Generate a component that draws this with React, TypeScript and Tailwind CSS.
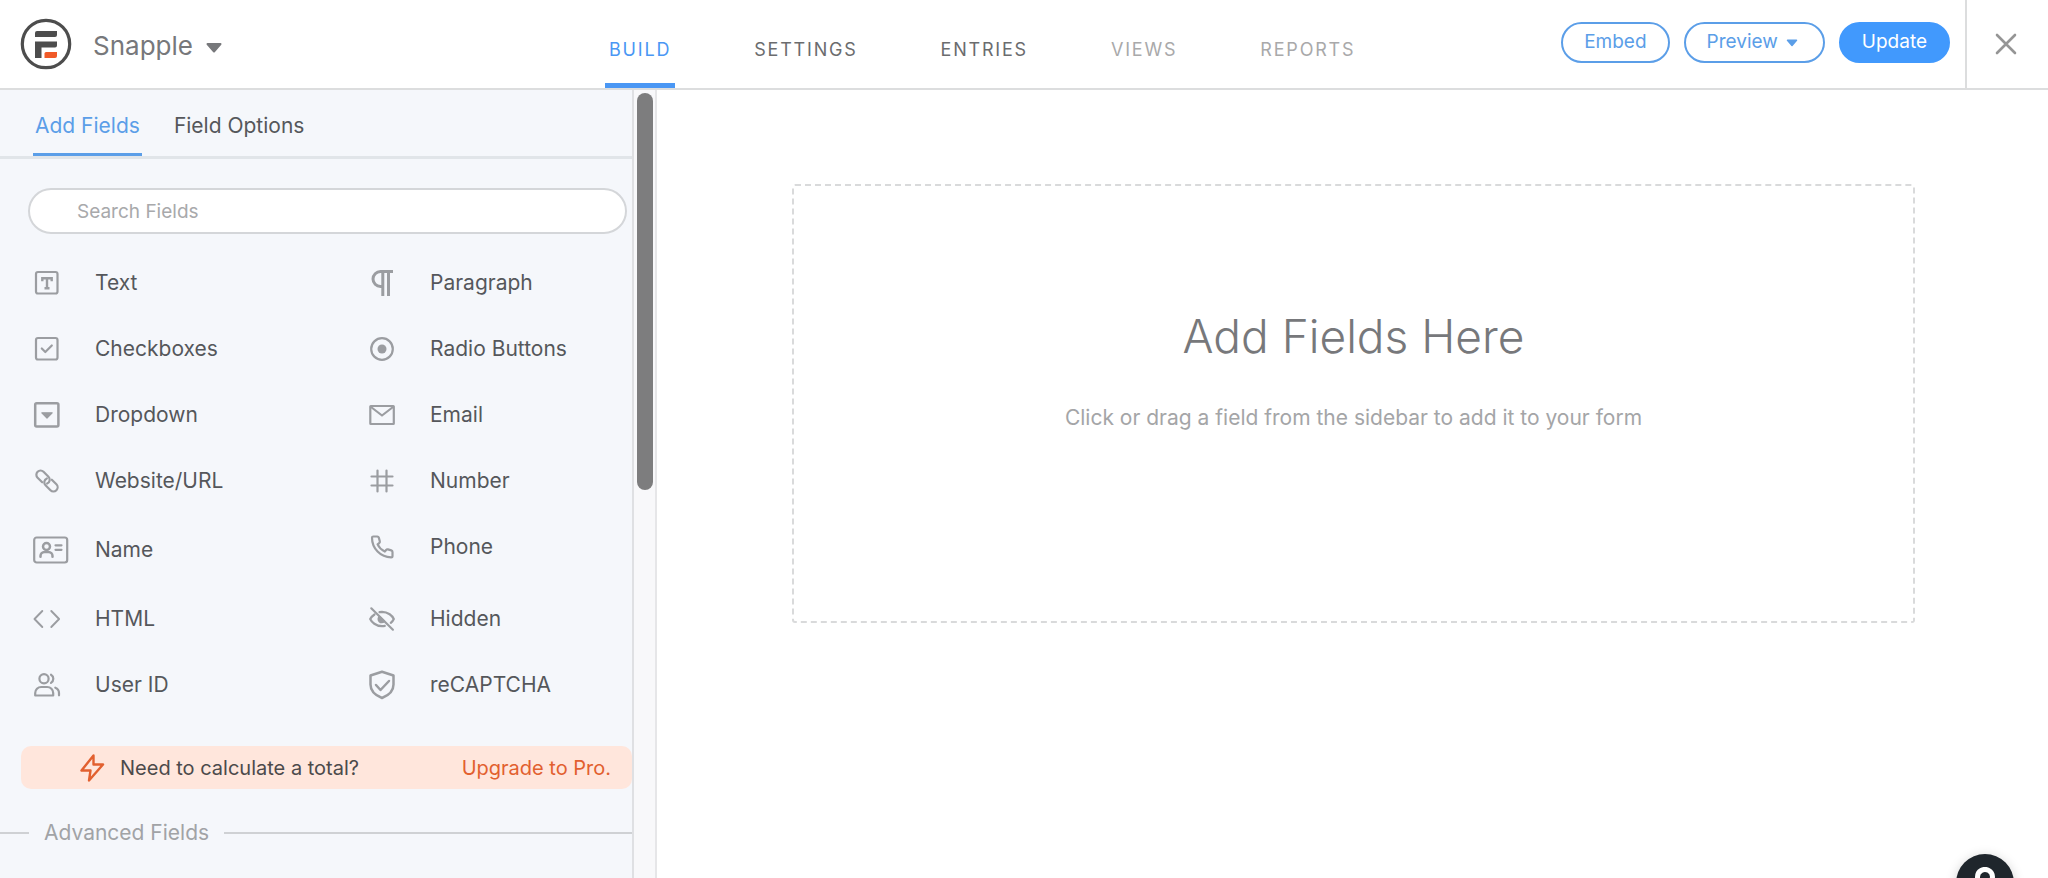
import type { ReactNode } from "react";

type Field = { label: string; icon: ReactNode };

function Icon({ children, className = "size-7", box = "0 0 28 28" }: { children: ReactNode; className?: string; box?: string }) {
  return (
    <svg
      viewBox={box}
      className={className}
      fill="none"
      stroke="currentColor"
      strokeWidth="2.200"
      strokeLinecap="round"
      strokeLinejoin="round"
      aria-hidden="true"
    >
      {children}
    </svg>
  );
}

const textIcon = (
  <Icon>
    <rect x="3" y="3" width="21.500" height="21.500" rx="2" />
    <path d="M9.300 12.200V9.300h9.400v2.900M14 9.500v10M11.500 19.300h5" strokeWidth="2.400" strokeLinecap="butt" strokeLinejoin="miter" />
  </Icon>
);
const paragraphIcon = (
  <Icon>
    <path d="M25 2.500H12.500a7.500 7.500 0 0 0 0 15H14M14.800 2.500V27M20.500 2.500V27" strokeWidth="3" strokeLinecap="butt" />
  </Icon>
);
const checkIcon = (
  <Icon>
    <rect x="3" y="3" width="21.500" height="21.500" rx="2" />
    <path d="m8.800 13.500 3.500 3.500 6.500-6.500" />
  </Icon>
);
const radioIcon = (
  <Icon>
    <circle cx="14" cy="14" r="10.800" />
    <circle cx="14" cy="14" r="4.500" fill="currentColor" stroke="none" />
  </Icon>
);
const dropdownIcon = (
  <Icon>
    <rect x="2.200" y="2.200" width="23.200" height="23.200" rx="1.500" strokeWidth="2.500" />
    <path d="M8.800 11.800h10.400L14 17z" fill="currentColor" strokeWidth="1.200" />
  </Icon>
);
const emailIcon = (
  <Icon>
    <rect x="2.300" y="5" width="23.500" height="18" rx="0.500" />
    <path d="m3 6 11 8.500L25 6" />
  </Icon>
);
const linkIcon = (
  <Icon>
    <g transform="rotate(45 14 14)">
      <path d="M11.500 18.300H5a4.200 4.200 0 0 1 0-8.400h7a4.200 4.200 0 0 1 3.900 5.800" />
      <path d="M16.500 9.700H23a4.200 4.200 0 0 1 0 8.400h-7a4.200 4.200 0 0 1-3.900-5.800" />
    </g>
  </Icon>
);
const numberIcon = (
  <Icon>
    <path d="M9.500 3.500v21M18.500 3.500v21M3.500 9.500h21M3.500 18.500h21" />
  </Icon>
);
const nameIcon = (
  <Icon className="h-7 w-9" box="0 0 36 28">
    <rect x="1.200" y="1.500" width="33" height="25" rx="2.500" />
    <circle cx="13.500" cy="10.500" r="3.500" strokeWidth="2.500" />
    <path d="M7.500 20.800v-.8a4 4 0 0 1 4-4h4a4 4 0 0 1 4 4v.8" strokeWidth="2.500" />
    <path d="M22.500 9.300h6M22.500 13.800h6" />
  </Icon>
);
const phoneIcon = (
  <Icon>
    <path d="M4 4.800C4 4 4.600 3.500 5.300 3.500h4c.8 0 1.300.4 1.500 1.100l1 3.700c.2.700 0 1.300-.6 1.800l-1.600 1.300a15 15 0 0 0 7.200 7.200l1.300-1.600c.5-.6 1.100-.8 1.800-.6l3.400 1c.7.200 1.200.8 1.200 1.500v4c0 .8-.6 1.400-1.400 1.400C12.500 24.300 4 15.500 4 4.800z" />
  </Icon>
);
const codeIcon = (
  <Icon>
    <path d="m9.300 6-7.800 8 7.800 8M18.300 6l7.800 8-7.800 8" strokeWidth="1.900" />
  </Icon>
);
const hiddenIcon = (
  <Icon>
    <path d="M11.500 7.100a13 13 0 0 1 2.500-.3c6 0 10.500 4.200 11.800 7.200-.5 1.200-1.500 2.500-3 3.800M6.500 9.500C4.400 10.900 2.900 12.600 2.200 14c1.300 3 5.800 7.200 11.800 7.200 1 0 1.900-.1 2.800-.3" />
    <path d="M11.500 11.800a3.200 3.200 0 0 0 4.600 4.500z" fill="currentColor" />
    <path d="m3.300 3.300 21.600 21.400" />
  </Icon>
);
const usersIcon = (
  <Icon>
    <circle cx="11" cy="7.800" r="4.600" />
    <path d="M2.200 24.500V22a6 6 0 0 1 6-6h6a6 6 0 0 1 6 6v2.500zM18 3.700a4.800 4.800 0 0 1 0 8.200M22.300 16.700c2.600 1 3.700 3 3.700 5.300v2.300" />
  </Icon>
);
const shieldIcon = (
  <Icon className="h-8 w-7" box="0 0 28 32">
    <path d="M14 2.700 2.500 6.500v9c0 6.300 3.800 10.500 11.500 13.500 7.700-3 11.500-7.200 11.500-13.500v-9z" strokeWidth="2.500" />
    <path d="m8 16 4.500 5 8.500-9" strokeWidth="2.500" />
  </Icon>
);

const rows: Field[][] = [
  [{ label: "Text", icon: textIcon }, { label: "Paragraph", icon: paragraphIcon }],
  [{ label: "Checkboxes", icon: checkIcon }, { label: "Radio Buttons", icon: radioIcon }],
  [{ label: "Dropdown", icon: dropdownIcon }, { label: "Email", icon: emailIcon }],
  [{ label: "Website/URL", icon: linkIcon }, { label: "Number", icon: numberIcon }],
  [{ label: "Name", icon: nameIcon }, { label: "Phone", icon: phoneIcon }],
  [{ label: "HTML", icon: codeIcon }, { label: "Hidden", icon: hiddenIcon }],
  [{ label: "User ID", icon: usersIcon }, { label: "reCAPTCHA", icon: shieldIcon }],
];

const tabs = [
  { label: "BUILD", style: "border-[#4a97f4] text-[#4a97f4]" },
  { label: "SETTINGS", style: "border-transparent text-[#6b6c6e]" },
  { label: "ENTRIES", style: "border-transparent text-[#6b6c6e]" },
  { label: "VIEWS", style: "border-transparent text-[#a9a9aa]" },
  { label: "REPORTS", style: "border-transparent text-[#a9a9aa]" },
];

function Header() {
  return (
    <header className="flex h-[90px] shrink-0 border-b-2 border-[#dcddde] bg-white">
      <div className="flex w-[605px] shrink-0 items-center pl-5">
        <svg viewBox="0 0 52 52" className="size-[52px]" role="img" aria-label="Formidable Forms">
          <circle cx="26" cy="26" r="23.700" fill="none" stroke="#4d4d4d" strokeWidth="3.200" />
          <path d="M17 13h20v4a2 2 0 0 1-2 2H15v-4a2 2 0 0 1 2-2z" fill="#4d4d4d" />
          <path d="M15 23.500h22v4a2 2 0 0 1-2 2H21.500V40H15z" fill="#4d4d4d" />
          <path d="M26 34h11v4a2 2 0 0 1-2 2H24.500v-4.500a1.500 1.500 0 0 1 1.500-1.500z" fill="#f05a28" />
        </svg>
        <button type="button" className="ml-[21px] flex items-center gap-3 pt-1 text-[26px] leading-8 text-[#77787b]">
          Snapple
          <svg viewBox="0 0 18 12" className="mt-1 h-3 w-[18px]" aria-hidden="true">
            <path d="M2.500 2h13L9 9.500z" fill="currentColor" stroke="currentColor" strokeWidth="2" strokeLinejoin="round" />
          </svg>
        </button>
      </div>
      <nav className="flex gap-[75px]">
        {tabs.map((t) => (
          <a key={t.label} href="#" className={`flex items-center border-b-[5px] px-1 pt-4 text-[18px] tracking-widest ${t.style}`}>
            {t.label}
          </a>
        ))}
      </nav>
      <div className="ml-auto flex items-start gap-[14px] pt-[22px] pr-[15px] text-[19px]">
        <button type="button" className="h-[41px] rounded-full border-2 border-[#5b9ee8] px-[21px] text-[#5b9ee8]">
          Embed
        </button>
        <button type="button" className="flex h-[41px] items-center gap-2 rounded-full border-2 border-[#5b9ee8] px-[21px] text-[#5b9ee8]">
          Preview
          <svg viewBox="0 0 12 8" className="mr-1 h-2 w-3" aria-hidden="true">
            <path d="M1.500 1.200h9L6 6.500z" fill="currentColor" stroke="currentColor" strokeWidth="1.500" strokeLinejoin="round" />
          </svg>
        </button>
        <button type="button" className="h-[41px] rounded-full border-2 border-[#4199fd] bg-[#4199fd] px-[21px] text-white">
          Update
        </button>
      </div>
      <button type="button" aria-label="Close" className="flex w-[83px] items-center justify-center border-l-2 border-[#dcddde] pr-1 text-[#959595]">
        <svg viewBox="0 0 22 22" className="size-[22px]" fill="none" stroke="currentColor" strokeWidth="2.600" strokeLinecap="round">
          <path d="m2 2 18 18M20 2 2 20" />
        </svg>
      </button>
    </header>
  );
}

function FieldRow({ fields, tall }: { fields: Field[]; tall: boolean }) {
  return (
    <li className={tall ? "flex h-[72px] items-start" : "flex h-[66px] items-start"}>
      {fields.map((f, i) => (
        <button
          key={f.label}
          type="button"
          className={`flex items-center text-left ${i === 0 ? "w-[335px] shrink-0" : "flex-1"} ${tall && i === 0 ? "h-[72px]" : "h-[66px]"}`}
        >
          <span className="flex w-[62px] shrink-0 text-[#9b9da1]">{f.icon}</span>
          {f.label}
        </button>
      ))}
    </li>
  );
}

function Sidebar() {
  return (
    <aside className="flex w-[657px] shrink-0 bg-[#f5f7fb]">
      <div className="min-w-0 flex-1 overflow-hidden text-[21px] text-[#55575b]">
        <div className="flex h-[69px] gap-[30px] border-b-[3px] border-[#e1e5e9] pl-[33px]">
          <a href="#" className="flex items-center border-b-[3px] border-[#5b9ee8] px-0.5 pt-2 text-[#5b9ee8]">
            Add Fields
          </a>
          <a href="#" className="flex items-center border-b-[3px] border-transparent px-0.5 pt-2">
            Field Options
          </a>
        </div>
        <div className="pt-[29px] pr-[5px] pl-7">
          <input
            type="search"
            aria-label="Search fields"
            placeholder="Search Fields"
            className="block h-[46px] w-full rounded-full border-2 border-[#d4d6d9] bg-white px-[47px] text-[19px] outline-none placeholder:text-[#a8a9ab]"
          />
        </div>
        <ul className="mt-4 pl-[33px]">
          {rows.map((r, i) => (
            <FieldRow key={r[0].label} fields={r} tall={i === 4} />
          ))}
        </ul>
        <div className="mt-7 ml-[21px] flex h-[43px] items-center rounded-[10px] bg-[#ffe6dc] pr-[21px] pl-[58px] text-[20px]">
          <svg viewBox="0 0 26 30" className="h-[30px] w-[26px]" fill="none" stroke="#e2602f" strokeWidth="2.400" strokeLinejoin="round" aria-hidden="true">
            <path d="M14.500 2.500 2.500 17.500h9l-1.500 10L24 11.500h-9.500z" />
          </svg>
          <span className="ml-[15px] text-[#4c4a4b]">Need to calculate a total?</span>
          <a href="#" className="ml-auto text-[#e2602f]">
            Upgrade to Pro.
          </a>
        </div>
        <div className="mt-7 flex items-center gap-[15px] leading-8 text-[#a1a3a6]">
          <span className="h-0.5 w-[29px] bg-[#cfd1d4]" />
          <h2>Advanced Fields</h2>
          <span className="h-0.5 flex-1 bg-[#cfd1d4]" />
        </div>
      </div>
      <div className="w-[25px] border-r-2 border-l-2 border-r-[#e6e6e8] border-l-[#dfe0e3] bg-[#f8f8fa] px-[3px] pt-[3px]">
        <div className="h-[397px] w-4 rounded-full bg-[#7d7d7e]" />
      </div>
    </aside>
  );
}

export default function App() {
  return (
    <div className="flex h-screen flex-col overflow-hidden bg-white font-['Inter',sans-serif]">
      <Header />
      <div className="flex min-h-0 flex-1">
        <Sidebar />
        <main className="flex-1 pt-[94px] pr-[133px] pl-[135px]">
          <section className="h-[439px] rounded-[3px] border-2 border-dashed border-[#d9dadb] pt-[118px] text-center">
            <h1 className="text-[46px] leading-[64px] font-light text-[#77787b]">Add Fields Here</h1>
            <p className="mt-9 text-[21px] leading-7 text-[#a4a5a7]">Click or drag a field from the sidebar to add it to your form</p>
          </section>
        </main>
      </div>
      <button
        type="button"
        aria-label="Help"
        className="fixed right-[34px] -bottom-[34px] flex size-[58px] justify-center rounded-full bg-[#1f262c] pt-[13px] text-white shadow-[0_2px_12px_rgba(0,0,0,0.18)]"
      >
        <svg viewBox="0 0 24 34" className="h-[34px] w-6" fill="none" stroke="currentColor" strokeWidth="5" aria-hidden="true">
          <path d="M4.500 11v-1a7.500 7.500 0 1 1 11.500 6.300c-2.500 1.700-4 2.700-4 6.200" />
          <circle cx="12" cy="29" r="3" fill="currentColor" stroke="none" />
        </svg>
      </button>
    </div>
  );
}
